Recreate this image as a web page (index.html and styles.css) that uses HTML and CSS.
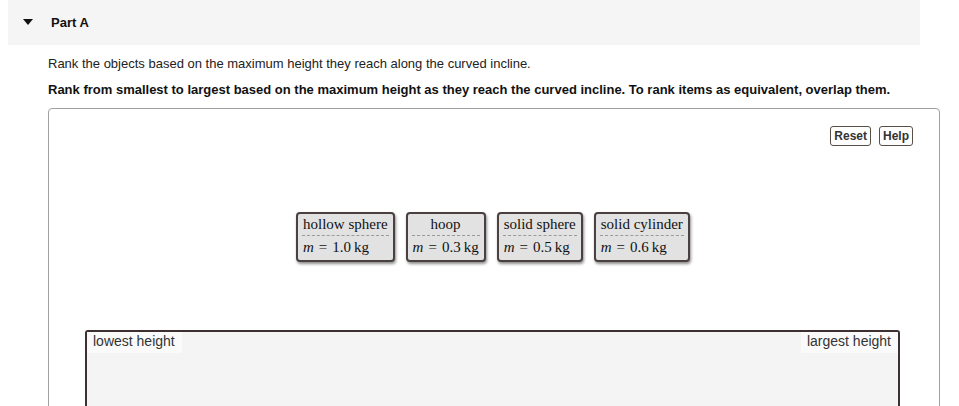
FILE: index.html
```html
<!DOCTYPE html>
<html>
<head>
<meta charset="utf-8">
<link rel="stylesheet" href="styles.css">
</head>
<body>
<div class="part-header">
  <span class="caret"></span>
  <span class="part-title">Part A</span>
</div>
<div class="part-body">
  <p class="prompt">Rank the objects based on the maximum height they reach along the curved incline.</p>
  <p class="instr">Rank from smallest to largest based on the maximum height as they reach the curved incline. To rank items as equivalent, overlap them.</p>
  <div class="rank-widget">
    <div class="toolbar">
      <button class="tool-btn">Reset</button>
      <button class="tool-btn">Help</button>
    </div>
    <div class="items">
      <div class="item"><div class="name">hollow sphere</div><div class="mass"><i>m</i><span class="eq">=</span>1.0<span class="unit">kg</span></div></div>
      <div class="item center"><div class="name">hoop</div><div class="mass"><i>m</i><span class="eq">=</span>0.3<span class="unit">kg</span></div></div>
      <div class="item"><div class="name">solid sphere</div><div class="mass"><i>m</i><span class="eq">=</span>0.5<span class="unit">kg</span></div></div>
      <div class="item"><div class="name">solid cylinder</div><div class="mass"><i>m</i><span class="eq">=</span>0.6<span class="unit">kg</span></div></div>
    </div>
    <div class="drop-zone">
      <span class="zone-label">lowest height</span>
      <span class="zone-label">largest height</span>
    </div>
  </div>
</div>
</body>
</html>
```
FILE: styles.css
```css
html, body {
  margin: 0;
  padding: 0;
  background: #fff;
  font-family: "Liberation Sans", Arial, sans-serif;
  color: #222;
  overflow: hidden;
}

.part-header {
  margin-left: 8px;
  width: 912px;
  height: 45px;
  background: #f5f5f5;
  display: flex;
  align-items: center;
}

.caret {
  width: 0;
  height: 0;
  margin-left: 15px;
  margin-top: -1px;
  border-left: 5px solid transparent;
  border-right: 5px solid transparent;
  border-top: 6px solid #111;
}

.part-title {
  margin-left: 18px;
  font-weight: bold;
  font-size: 13px;
  color: #111;
  margin-top: -1px;
}

.part-body {
  padding-left: 48px;
}

.prompt {
  margin: 11px 0 0;
  font-size: 13px;
  line-height: 15px;
  color: #222;
}

.instr {
  margin: 11px 0 0;
  font-size: 13px;
  line-height: 15px;
  font-weight: bold;
  color: #111;
}

.rank-widget {
  margin-top: 11px;
  width: 892px;
  height: 320px;
  border: 1px solid #a0a0a0;
  border-radius: 4px;
  box-sizing: border-box;
}

.toolbar {
  display: flex;
  justify-content: flex-end;
  gap: 8px;
  padding: 17px 26px 0 0;
}

.tool-btn {
  font-family: "Liberation Sans", Arial, sans-serif;
  font-weight: bold;
  font-size: 12px;
  color: #333;
  background: #fff;
  border: 1px solid #555045;
  border-radius: 3px;
  height: 20px;
  padding: 0 3px;
  line-height: 18px;
}

.items {
  display: flex;
  gap: 11px;
  padding: 66px 0 0 247px;
}

.item {
  background: #e2e2e2;
  border: 2px solid #4a4040;
  border-radius: 4px;
  padding: 2px 4px 2px;
  box-shadow: 1px 2px 3px rgba(0, 0, 0, 0.45);
  font-family: "Liberation Serif", "Times New Roman", serif;
  font-size: 15px;
  color: #111;
}

.item .name {
  padding: 0 1px 2px;
  border-bottom: 1px dashed #9a9a9a;
  line-height: 17px;
}

.item.center .name {
  text-align: center;
}

.item .mass {
  padding: 3px 1px 2px;
  line-height: 17px;
}

.item .eq {
  margin: 0 5px;
}

.item .unit {
  margin-left: 3px;
}

.drop-zone {
  margin: 68px 0 0 36px;
  width: 815px;
  height: 120px;
  box-sizing: border-box;
  background: #f4f4f4;
  border: 2px solid #3e3030;
  border-radius: 3px;
  display: flex;
  justify-content: space-between;
  align-items: flex-start;
}

.zone-label {
  background: #fafafa;
  font-size: 14px;
  line-height: 18px;
  padding: 0 7px 3px 6px;
  color: #333;
}
```
